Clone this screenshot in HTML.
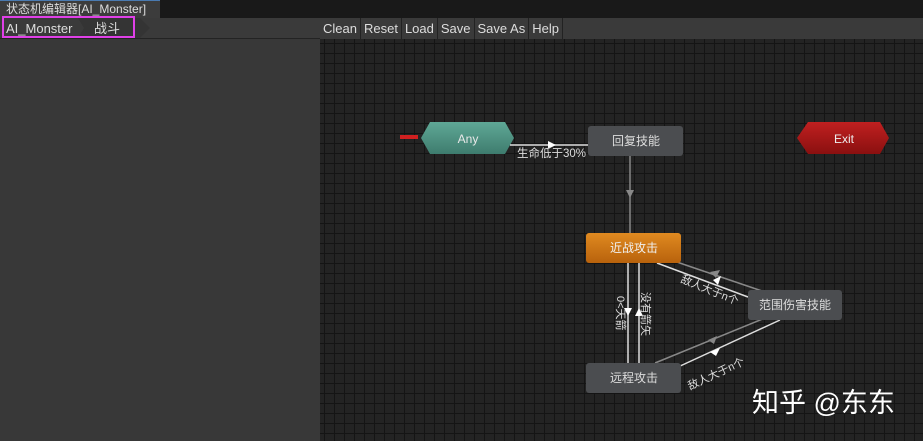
<!DOCTYPE html><html><head><meta charset="utf-8"><style>
body{margin:0;width:923px;height:441px;overflow:hidden;background:#383838;font-family:"Liberation Sans","Noto Sans CJK SC",sans-serif;position:relative}
.top{position:absolute;left:0;top:0;width:923px;height:18px;background:#191919}
.tab{position:absolute;left:0;top:0;width:160px;height:18px;background:#3c3c3c;border-top:1px solid #4a7ab0;box-sizing:border-box;color:#ddd;font-size:12px;line-height:16px;padding-left:6px}
.left{position:absolute;left:0;top:18px;width:320px;height:423px;background:#383838}
.bc{position:absolute;left:0;top:18px;width:320px;height:20px;background:#3a3a3a;border-bottom:1px solid #232323;color:#ddd;font-size:13px;line-height:22px}
.hl{position:absolute;left:2px;top:16px;width:133px;height:22px;border:2px solid #e040e8;box-sizing:border-box}
.tb{position:absolute;left:320px;top:18px;width:603px;height:21px;background:#3a3a3a;border-bottom:1px solid #222;display:flex}
.tb span{color:#ddd;font-size:13px;line-height:21px;padding:0 3px;border-right:1px solid #222}
.graph{position:absolute;left:320px;top:39px;width:603px;height:402px;background-color:#232323;background-image:linear-gradient(#141414 1px,transparent 1px),linear-gradient(90deg,#141414 1px,transparent 1px);background-size:10px 10px;background-position:4px 4px}
</style></head><body>
<div class="top"></div><div class="tab">状态机编辑器[AI_Monster]</div>
<div class="left"></div>
<div class="bc"><svg style="position:absolute;left:78px;top:0" width="80" height="20"><polygon points="0,0 62,0 72,10 62,20 0,20 6,10" fill="#343434"/></svg><span style="position:absolute;left:6px">AI_Monster</span><span style="position:absolute;left:94px">战斗</span></div>
<div class="hl"></div>
<div class="tb"><span>Clean</span><span>Reset</span><span>Load</span><span>Save</span><span>Save As</span><span>Help</span></div>
<div class="graph"></div>
<svg style="position:absolute;left:0;top:0" width="923" height="441" font-family="Liberation Sans,Noto Sans CJK SC,sans-serif">
<defs><linearGradient id="g1" x1="0" y1="0" x2="0" y2="1"><stop offset="0" stop-color="#5fa896"/><stop offset="1" stop-color="#3e7c6e"/></linearGradient>
<linearGradient id="g2" x1="0" y1="0" x2="0" y2="1"><stop offset="0" stop-color="#c02020"/><stop offset="1" stop-color="#8a1010"/></linearGradient>
<linearGradient id="g3" x1="0" y1="0" x2="0" y2="1"><stop offset="0" stop-color="#e08a20"/><stop offset="1" stop-color="#b8620c"/></linearGradient></defs>
<rect x="400" y="135" width="18" height="4" fill="#d02020"/>
<polygon points="430,122 505,122 514,138 505,154 430,154 421,138" fill="url(#g1)"/>
<text x="468" y="143" fill="#e8e8e8" font-size="12" text-anchor="middle">Any</text>
<polygon points="808,122 880,122 889,138 880,154 808,154 797,138" fill="url(#g2)"/>
<text x="844" y="143" fill="#eee" font-size="12" text-anchor="middle">Exit</text>
<line x1="510" y1="145" x2="588" y2="145" stroke="#ddd" stroke-width="1.5"/>
<polygon points="548,141 556,145 548,149" fill="#fff"/>
<text x="517" y="157" fill="#ddd" font-size="11.5">生命低于30%</text>
<line x1="630" y1="156" x2="630" y2="233" stroke="#888" stroke-width="1.5"/>
<polygon points="626,190 634,190 630,198" fill="#888"/>
<rect x="588" y="126" width="95" height="30" rx="3" fill="#4b4d50"/>
<text x="636" y="145" fill="#ddd" font-size="12" text-anchor="middle">回复技能</text>
<line x1="628" y1="263" x2="628" y2="363" stroke="#ddd" stroke-width="1.5"/>
<line x1="639" y1="263" x2="639" y2="363" stroke="#ddd" stroke-width="1.5"/>
<polygon points="624,308 632,308 628,316" fill="#fff"/>
<polygon points="635,316 643,316 639,308" fill="#fff"/>
<text transform="translate(617,296) rotate(90)" fill="#ddd" font-size="11">0&lt;天箭</text>
<text transform="translate(642,292) rotate(90)" fill="#ddd" font-size="11">没有箭矢</text>
<line x1="657" y1="263" x2="748" y2="297" stroke="#ddd" stroke-width="1.5"/>
<line x1="665" y1="258" x2="762" y2="291" stroke="#888" stroke-width="1.5"/>
<polygon points="713,280 721,276 718,285" fill="#fff"/>
<polygon points="710,272 720,270 716,278" fill="#888"/>
<text transform="translate(680,282) rotate(22)" fill="#ddd" font-size="11">敌人大于n个</text>
<line x1="655" y1="363" x2="765" y2="318" stroke="#888" stroke-width="1.5"/>
<line x1="665" y1="373" x2="780" y2="320" stroke="#ddd" stroke-width="1.5"/>
<polygon points="708,340 717,336 714,344" fill="#888"/>
<polygon points="710,352 720,348 716,356" fill="#fff"/>
<text transform="translate(690,390) rotate(-25)" fill="#ddd" font-size="11">敌人大于n个</text>
<rect x="586" y="233" width="95" height="30" rx="3" fill="url(#g3)"/>
<text x="634" y="252" fill="#f0f0f0" font-size="12" text-anchor="middle">近战攻击</text>
<rect x="748" y="290" width="94" height="30" rx="3" fill="#4b4d50"/>
<text x="795" y="309" fill="#ddd" font-size="12" text-anchor="middle">范围伤害技能</text>
<rect x="586" y="363" width="95" height="30" rx="3" fill="#4b4d50"/>
<text x="634" y="382" fill="#ddd" font-size="12" text-anchor="middle">远程攻击</text>
<text x="752" y="412" fill="#fff" font-size="27">知乎 @东东</text>
</svg>
</body></html>
